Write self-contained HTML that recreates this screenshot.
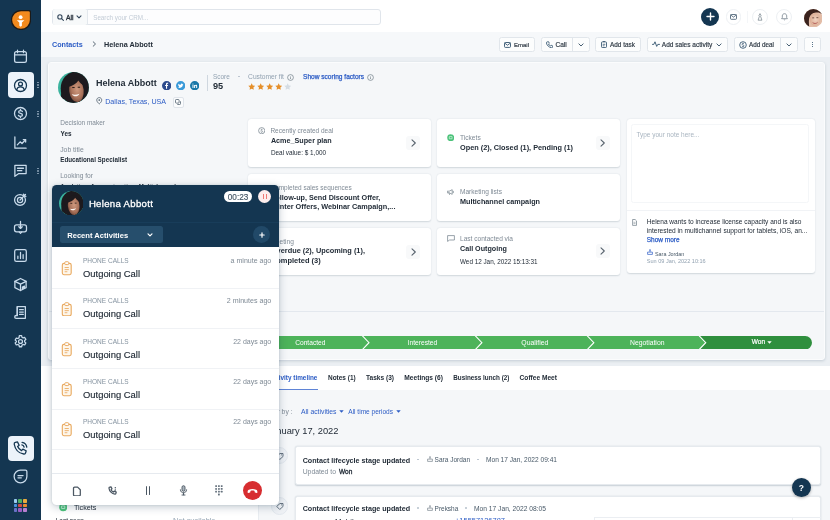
<!DOCTYPE html>
<html lang="en"><head><meta charset="utf-8"><title>Helena Abbott - Contacts</title>
<style>
html,body{margin:0;padding:0}
body{width:830px;height:520px;overflow:hidden;position:relative;background:#ebeff3;font-family:"Liberation Sans",sans-serif;-webkit-font-smoothing:antialiased;filter:blur(0.35px)}
.b{position:absolute;box-sizing:border-box;display:block}
.t{position:absolute;white-space:nowrap;display:block}
</style></head><body>
<div class="b" style="left:41.00px;top:0.00px;width:789.00px;height:32.00px;background:#ffffff;"></div>
<div class="b" style="left:41.00px;top:32.00px;width:789.00px;height:24.50px;background:#f6f8fa;"></div>
<div class="b" style="left:41.00px;top:56.50px;width:789.00px;height:464.00px;background:#ebeff3;"></div>
<div class="b" style="left:47.50px;top:62.30px;width:777.50px;height:298.20px;background:#f5f7f9;border:1px solid #fbfcfd;border-radius:3px;box-shadow:0 1px 3px rgba(18,52,77,.18);"></div>
<div class="b" style="left:0.00px;top:0.00px;width:41.00px;height:520.00px;background:#143651;"></div>
<svg class="b" style="left:10.50px;top:10.00px;" width="20" height="20" viewBox="0 0 20 20"><path d="M10 0.5h7.5a2 2 0 0 1 2 2V10a9.5 9.5 0 1 1-9.5-9.5z" fill="#f28a1e" stroke="#1c1a18" stroke-width="1.300"/><circle cx="9.6" cy="7.2" r="1.9" fill="#fff"/><path d="M5.8 10.3h7.6l-2.5 2.3v3.2l-1.3 1-1.3-1v-3.2z" fill="#fff"/></svg>
<div class="b" style="left:7.50px;top:72.30px;width:26.00px;height:25.50px;background:#ecf3fa;border-radius:4px;"></div>
<div class="b" style="left:7.50px;top:435.80px;width:26.00px;height:25.50px;background:#ecf3fa;border-radius:4px;"></div>
<svg class="b" style="left:12.80px;top:48.50px;" width="15" height="15" viewBox="0 0 16 16"><g fill="none" stroke="#c9dbeb" stroke-width="1.35" stroke-linecap="round" stroke-linejoin="round"><rect x="1.7" y="2.8" width="12.6" height="11.4" rx="2"/><path d="M1.7 6.3h12.6M4.8 1.3v2.6M11.2 1.3v2.6"/></g></svg>
<svg class="b" style="left:12.80px;top:77.50px;" width="15" height="15" viewBox="0 0 16 16"><g fill="none" stroke="#143651" stroke-width="1.35" stroke-linecap="round" stroke-linejoin="round"><circle cx="8" cy="8" r="6.4"/><circle cx="8" cy="6.4" r="2.1"/><path d="M3.9 12.6c.6-2.2 2.2-3.1 4.1-3.1s3.5.9 4.1 3.1"/></g></svg>
<svg class="b" style="left:12.80px;top:106.30px;" width="15" height="15" viewBox="0 0 16 16"><g fill="none" stroke="#c9dbeb" stroke-width="1.35" stroke-linecap="round" stroke-linejoin="round"><circle cx="8" cy="8" r="6.4"/><path d="M10 5.9c-.4-.7-1.1-1-2-1-1.200 0-2 .6-2 1.500 0 2.100 4.100 1 4.100 3.200 0 .9-.9 1.500-2.100 1.500-1 0-1.800-.4-2.200-1.100M8 3.700v1.200M8 11.100v1.200"/></g></svg>
<svg class="b" style="left:12.80px;top:135.00px;" width="15" height="15" viewBox="0 0 16 16"><g fill="none" stroke="#c9dbeb" stroke-width="1.35" stroke-linecap="round" stroke-linejoin="round"><path d="M2 2v12h12"/><path d="M4.600 10.500l3-3.200 2 1.800 3.800-4"/><path d="M11 5h2.500v2.500"/></g></svg>
<svg class="b" style="left:12.80px;top:163.30px;" width="15" height="15" viewBox="0 0 16 16"><g fill="none" stroke="#c9dbeb" stroke-width="1.35" stroke-linecap="round" stroke-linejoin="round"><path d="M2 2.500h12v8.800H6.200L2 14.200z"/><path d="M4.800 5.600h6.400M4.800 8.200h4.600"/></g></svg>
<svg class="b" style="left:12.80px;top:191.50px;" width="15" height="15" viewBox="0 0 16 16"><g fill="none" stroke="#c9dbeb" stroke-width="1.35" stroke-linecap="round" stroke-linejoin="round"><circle cx="7.500" cy="8.500" r="5.800"/><circle cx="7.500" cy="8.500" r="2.800"/><path d="M7.500 8.500l5.800-5.800M11.300 2.200l.4 2 2 .4"/></g></svg>
<svg class="b" style="left:12.80px;top:220.30px;" width="15" height="15" viewBox="0 0 16 16"><g fill="none" stroke="#c9dbeb" stroke-width="1.35" stroke-linecap="round" stroke-linejoin="round"><rect x="1.600" y="5.300" width="12.800" height="7.400" rx="2.200"/><path d="M8 1.400v7.400M6.200 7.200L8 9l1.800-1.800M6.600 12.700L8 14.200l1.400-1.500"/></g></svg>
<svg class="b" style="left:12.80px;top:248.10px;" width="15" height="15" viewBox="0 0 16 16"><g fill="none" stroke="#c9dbeb" stroke-width="1.35" stroke-linecap="round" stroke-linejoin="round"><rect x="1.800" y="1.800" width="12.400" height="12.400" rx="1.800"/><path d="M5.200 11.300V8.800M8 11.300V4.800M10.800 11.300V7.200"/></g></svg>
<svg class="b" style="left:12.80px;top:276.50px;" width="15" height="15" viewBox="0 0 16 16"><g fill="none" stroke="#c9dbeb" stroke-width="1.35" stroke-linecap="round" stroke-linejoin="round"><path d="M8 1.600l6 3v6.800l-6 3-6-3V4.600z"/><path d="M2 4.600l6 3 6-3M8 7.600v6.800"/><path d="M10 10.800l2.200-1.100v1.600l-2.200 1.100z"/></g></svg>
<svg class="b" style="left:12.80px;top:305.30px;" width="15" height="15" viewBox="0 0 16 16"><g fill="none" stroke="#c9dbeb" stroke-width="1.35" stroke-linecap="round" stroke-linejoin="round"><path d="M4.500 1.800h8.700v12.400H3.500c-1.100 0-1.700-.7-1.700-1.500s.6-1.500 1.700-1.500h1z"/><path d="M4.500 11.200V1.800M7 5h4M7 7.500h4M7 10h4"/></g></svg>
<svg class="b" style="left:12.80px;top:333.70px;" width="15" height="15" viewBox="0 0 16 16"><g fill="none" stroke="#c9dbeb" stroke-width="1.35" stroke-linecap="round" stroke-linejoin="round"><circle cx="8" cy="8" r="2.100"/><path d="M6.800 1.800h2.400l.4 1.700 1.200.7 1.700-.5 1.200 2.100-1.300 1.200v1.400l1.300 1.200-1.200 2.100-1.700-.5-1.200.7-.4 1.700H6.800l-.4-1.700-1.200-.7-1.700.5-1.200-2.100 1.300-1.200V7.600L2.300 6.400l1.200-2.100 1.700.5 1.200-.7z"/></g></svg>
<svg class="b" style="left:11.90px;top:439.90px;" width="17" height="17" viewBox="0 0 16 16"><g fill="none" stroke="#143651" stroke-width="1.250" stroke-linecap="round" stroke-linejoin="round"><path d="M3.200 2.300l2-.5 1.500 3.200-1.400 1.200c.7 1.700 2 3 3.700 3.800l1.200-1.400 3.100 1.500-.5 2c-.2.800-.9 1.200-1.700 1.100C6.500 12.500 3 9 2.100 4c-.1-.8.300-1.500 1.100-1.700z"/><path d="M9.300 4.600c1.100.2 1.900 1 2.100 2.100M9.500 2.200c2.300.4 4 2.100 4.400 4.400"/></g></svg>
<svg class="b" style="left:12.80px;top:469.20px;" width="15" height="15" viewBox="0 0 16 16"><g fill="none" stroke="#c9dbeb" stroke-width="1.35" stroke-linecap="round" stroke-linejoin="round"><path d="M8 1.200h5.300a1.500 1.500 0 0 1 1.500 1.500V8A6.800 6.800 0 1 1 8 1.200z"/><path d="M5.300 7h5.400M5.300 9.400h3.600"/></g></svg>
<div class="b" style="left:13.60px;top:498.80px;width:3.90px;height:3.90px;background:#9ccdf0;border-radius:0.8px;"></div>
<div class="b" style="left:18.30px;top:498.80px;width:3.90px;height:3.90px;background:#4fae62;border-radius:0.8px;"></div>
<div class="b" style="left:23.00px;top:498.80px;width:3.90px;height:3.90px;background:#e9ab3f;border-radius:0.8px;"></div>
<div class="b" style="left:13.60px;top:503.50px;width:3.90px;height:3.90px;background:#4a92de;border-radius:0.8px;"></div>
<div class="b" style="left:18.30px;top:503.50px;width:3.90px;height:3.90px;background:#d24a47;border-radius:0.8px;"></div>
<div class="b" style="left:23.00px;top:503.50px;width:3.90px;height:3.90px;background:#e58a2e;border-radius:0.8px;"></div>
<div class="b" style="left:13.60px;top:508.20px;width:3.90px;height:3.90px;background:#6a72c8;border-radius:0.8px;"></div>
<div class="b" style="left:18.30px;top:508.20px;width:3.90px;height:3.90px;background:#9a5cc4;border-radius:0.8px;"></div>
<div class="b" style="left:23.00px;top:508.20px;width:3.90px;height:3.90px;background:#b97fd0;border-radius:0.8px;"></div>
<div class="b" style="left:37.10px;top:81.80px;width:1.50px;height:1.50px;background:#8ba2b5;border-radius:1px;"></div>
<div class="b" style="left:37.10px;top:84.30px;width:1.50px;height:1.50px;background:#8ba2b5;border-radius:1px;"></div>
<div class="b" style="left:37.10px;top:86.80px;width:1.50px;height:1.50px;background:#8ba2b5;border-radius:1px;"></div>
<div class="b" style="left:37.10px;top:110.60px;width:1.50px;height:1.50px;background:#8ba2b5;border-radius:1px;"></div>
<div class="b" style="left:37.10px;top:113.10px;width:1.50px;height:1.50px;background:#8ba2b5;border-radius:1px;"></div>
<div class="b" style="left:37.10px;top:115.60px;width:1.50px;height:1.50px;background:#8ba2b5;border-radius:1px;"></div>
<div class="b" style="left:37.10px;top:167.60px;width:1.50px;height:1.50px;background:#8ba2b5;border-radius:1px;"></div>
<div class="b" style="left:37.10px;top:170.10px;width:1.50px;height:1.50px;background:#8ba2b5;border-radius:1px;"></div>
<div class="b" style="left:37.10px;top:172.60px;width:1.50px;height:1.50px;background:#8ba2b5;border-radius:1px;"></div>
<div class="b" style="left:52.00px;top:8.60px;width:329.00px;height:16.80px;background:#fdfdfe;border:1px solid #e0e5eb;border-radius:3px;"></div>
<div class="b" style="left:52.80px;top:9.40px;width:34.40px;height:15.20px;background:#f7f9fa;border-radius:2px;"></div>
<div class="b" style="left:87.20px;top:9.40px;width:0.80px;height:15.20px;background:#e3e8ed;"></div>
<svg class="b" style="left:57.30px;top:13.90px;" width="7" height="7" viewBox="0 0 7 7"><circle cx="2.900" cy="2.900" r="2.100" fill="none" stroke="#33475b" stroke-width="1.100"/><path d="M4.600 4.600l1.800 1.800" stroke="#33475b" stroke-width="1.100" stroke-linecap="round"/></svg>
<span class="t" style="left:65.90px;top:12px;font-size:6.75px;line-height:11px;color:#232d38;-webkit-text-stroke:0.3px #232d38;">All</span>
<svg class="b" style="left:76.30px;top:15.40px;" width="6" height="4" viewBox="0 0 6 4"><path d="M1 0.900l2 2 2-2" fill="none" stroke="#33475b" stroke-width="1.100" stroke-linecap="round" stroke-linejoin="round"/></svg>
<span class="t" style="left:93.20px;top:12px;font-size:6.29px;line-height:11px;color:#c3ccd6;">Search your CRM...</span>
<div class="b" style="left:701.40px;top:8.10px;width:17.60px;height:17.60px;background:#143651;border-radius:10px;"></div>
<svg class="b" style="left:705.70px;top:12.40px;" width="9" height="9" viewBox="0 0 9 9"><path d="M4.500 1v7M1 4.500h7" stroke="#fff" stroke-width="1.400" stroke-linecap="round"/></svg>
<div class="b" style="left:725.60px;top:9.00px;width:15.60px;height:15.60px;background:#ffffff;border:1px solid #edf0f3;border-radius:8px;"></div>
<div class="b" style="left:752.20px;top:9.00px;width:15.60px;height:15.60px;background:#ffffff;border:1px solid #edf0f3;border-radius:8px;"></div>
<div class="b" style="left:776.20px;top:9.00px;width:15.60px;height:15.60px;background:#ffffff;border:1px solid #edf0f3;border-radius:8px;"></div>
<div class="b" style="left:747.30px;top:11.00px;width:0.70px;height:12.00px;background:#f4f6f8;"></div>
<svg class="b" style="left:729.90px;top:13.80px;" width="7" height="6" viewBox="0 0 7 6"><rect x="0.500" y="0.500" width="6" height="4.800" rx="0.800" fill="none" stroke="#3d566b" stroke-width="0.800"/><path d="M0.700 1l2.800 2.100 2.800-2.100" fill="none" stroke="#3d566b" stroke-width="0.800"/></svg>
<svg class="b" style="left:757.00px;top:13.00px;" width="6" height="8" viewBox="0 0 6 8"><path d="M3 0.600l1.100 2.200-.5.500 1.300 3.900H1.100l1.300-3.900-.5-.5z" fill="none" stroke="#6f7c87" stroke-width="0.700" stroke-linejoin="round"/></svg>
<svg class="b" style="left:780.50px;top:13.20px;" width="7" height="8" viewBox="0 0 7 8"><path d="M3.500 0.700c1.400 0 2.200 1 2.200 2.300v1.600l.7 1.100H.600l.7-1.100V3c0-1.300.800-2.300 2.200-2.300z" fill="none" stroke="#6f7c87" stroke-width="0.750" stroke-linejoin="round"/><path d="M2.800 6.600c.2.400 1.200.4 1.400 0" fill="none" stroke="#6f7c87" stroke-width="0.700"/></svg>
<svg class="b" style="left:803.50px;top:8.90px;" width="18.6" height="18.6" viewBox="0 0 21 21"><defs><clipPath id="ua"><circle cx="10.500" cy="10.500" r="10.500"/></clipPath><radialGradient id="ug" cx="0.55" cy="0.5" r="0.6"><stop offset="0" stop-color="#f0d2c0"/><stop offset="1" stop-color="#d9a98f"/></radialGradient></defs><g clip-path="url(#ua)"><rect width="21" height="21" fill="#e3bda8"/><path d="M-1 -1h23v9c-1.500-3-4.500-4.500-8.500-4C9.500 4.500 7 6.500 6 10c-.8 3-.5 6 0 12H-1z" fill="#3a221d"/><ellipse cx="12.500" cy="11.800" rx="6" ry="7.200" fill="url(#ug)"/><path d="M9.800 15.300c1.500 1.500 4 1.500 5.500-.2" stroke="#b5605a" stroke-width="1.100" fill="none"/><path d="M9.300 10h2.200M14 9.800h2.200" stroke="#5a3a30" stroke-width="0.900"/></g></svg>
<span class="t" style="left:52.00px;top:38px;font-size:7.20px;line-height:13px;color:#2c5cc5;font-weight:700;">Contacts</span>
<svg class="b" style="left:92.00px;top:41.30px;" width="5" height="6" viewBox="0 0 5 6"><path d="M1.200 0.800l2.300 2.200-2.300 2.200" fill="none" stroke="#475867" stroke-width="0.900" stroke-linecap="round" stroke-linejoin="round"/></svg>
<span class="t" style="left:104.00px;top:38px;font-size:7.25px;line-height:13px;color:#232d38;font-weight:700;">Helena Abbott</span>
<div class="b" style="left:498.60px;top:36.50px;width:36.90px;height:15.80px;background:#fcfdfd;border:1px solid #e1e6eb;border-radius:2.5px;"></div>
<div class="b" style="left:540.80px;top:36.50px;width:49.00px;height:15.80px;background:#fcfdfd;border:1px solid #e1e6eb;border-radius:2.5px;"></div>
<div class="b" style="left:572.40px;top:37.00px;width:0.80px;height:14.80px;background:#e1e6eb;"></div>
<div class="b" style="left:594.50px;top:36.50px;width:46.50px;height:15.80px;background:#fcfdfd;border:1px solid #e1e6eb;border-radius:2.5px;"></div>
<div class="b" style="left:646.60px;top:36.50px;width:81.40px;height:15.80px;background:#fcfdfd;border:1px solid #e1e6eb;border-radius:2.5px;"></div>
<div class="b" style="left:734.30px;top:36.50px;width:63.70px;height:15.80px;background:#fcfdfd;border:1px solid #e1e6eb;border-radius:2.5px;"></div>
<div class="b" style="left:779.60px;top:37.00px;width:0.80px;height:14.80px;background:#e1e6eb;"></div>
<div class="b" style="left:804.00px;top:36.50px;width:16.80px;height:15.80px;background:#fcfdfd;border:1px solid #e1e6eb;border-radius:2.5px;"></div>
<svg class="b" style="left:503.60px;top:41.50px;" width="7" height="6" viewBox="0 0 7 6"><rect x="0.500" y="0.500" width="6" height="4.900" rx="0.900" fill="none" stroke="#264966" stroke-width="0.850"/><path d="M0.700 1.100l2.800 2.100 2.800-2.100" fill="none" stroke="#264966" stroke-width="0.850"/></svg>
<span class="t" style="left:514.00px;top:40px;font-size:6.00px;line-height:10px;color:#2c3742;-webkit-text-stroke:0.17px #2c3742;">Email</span>
<svg class="b" style="left:545.60px;top:41.00px;" width="7" height="7" viewBox="0 0 7 7"><path d="M1.300 0.900l1.100-.3.900 1.700-.8.700c.4.900 1.100 1.600 2 2l.7-.8 1.700.900-.3 1.100c-.1.400-.5.600-.9.600C3 6.500 .7 4.200 .4 1.800c0-.4.200-.8.900-.9z" fill="none" stroke="#264966" stroke-width="0.800" stroke-linejoin="round"/></svg>
<span class="t" style="left:555.50px;top:39px;font-size:6.56px;line-height:11px;color:#2c3742;-webkit-text-stroke:0.17px #2c3742;">Call</span>
<svg class="b" style="left:577.60px;top:42.50px;" width="6" height="4" viewBox="0 0 6 4"><path d="M0.900 0.900l2.100 2.100 2.100-2.100" fill="none" stroke="#3d566b" stroke-width="0.950" stroke-linecap="round" stroke-linejoin="round"/></svg>
<svg class="b" style="left:600.60px;top:41.00px;" width="6" height="7" viewBox="0 0 6 7"><rect x="0.500" y="0.900" width="5" height="5.600" rx="0.800" fill="none" stroke="#264966" stroke-width="0.800"/><path d="M1.900 0.500h2.200M1.700 3.300h2.600M1.700 4.800h1.800" stroke="#264966" stroke-width="0.700" fill="none"/></svg>
<span class="t" style="left:610.00px;top:39px;font-size:6.42px;line-height:11px;color:#2c3742;-webkit-text-stroke:0.17px #2c3742;">Add task</span>
<svg class="b" style="left:652.00px;top:41.40px;" width="8" height="6" viewBox="0 0 8 6"><path d="M0.500 3.400h1.300l1.200-2.600 1.700 4.600 1.100-2h1.700" fill="none" stroke="#264966" stroke-width="0.850" stroke-linecap="round" stroke-linejoin="round"/></svg>
<span class="t" style="left:661.80px;top:39px;font-size:6.54px;line-height:11px;color:#2c3742;-webkit-text-stroke:0.17px #2c3742;">Add sales activity</span>
<svg class="b" style="left:716.00px;top:42.50px;" width="6" height="4" viewBox="0 0 6 4"><path d="M0.900 0.900l2.100 2.100 2.100-2.100" fill="none" stroke="#3d566b" stroke-width="0.950" stroke-linecap="round" stroke-linejoin="round"/></svg>
<svg class="b" style="left:739.20px;top:40.80px;" width="8" height="8" viewBox="0 0 8 8"><circle cx="4" cy="4" r="3.300" fill="none" stroke="#264966" stroke-width="0.800"/><path d="M5 3c-.2-.4-.6-.5-1-.5-.6 0-1 .3-1 .750 0 1 2 .5 2 1.550 0 .450-.4.750-1 .750-.5 0-.9-.2-1.100-.550M4 1.800v.7M4 5.500v.7" fill="none" stroke="#264966" stroke-width="0.650"/></svg>
<span class="t" style="left:749.00px;top:39px;font-size:6.33px;line-height:11px;color:#2c3742;-webkit-text-stroke:0.17px #2c3742;">Add deal</span>
<svg class="b" style="left:786.00px;top:42.50px;" width="6" height="4" viewBox="0 0 6 4"><path d="M0.900 0.900l2.100 2.100 2.100-2.100" fill="none" stroke="#3d566b" stroke-width="0.950" stroke-linecap="round" stroke-linejoin="round"/></svg>
<div class="b" style="left:811.80px;top:41.60px;width:1.30px;height:1.30px;background:#264966;border-radius:1px;"></div>
<div class="b" style="left:811.80px;top:43.90px;width:1.30px;height:1.30px;background:#264966;border-radius:1px;"></div>
<div class="b" style="left:811.80px;top:46.20px;width:1.30px;height:1.30px;background:#264966;border-radius:1px;"></div>
<svg class="b" style="left:57.80px;top:72.10px;" width="30.9" height="30.9" viewBox="0 0 31 31"><defs><clipPath id="hac"><circle cx="15.500" cy="15.500" r="15.500"/></clipPath><radialGradient id="hag" cx="0.55" cy="0.45" r="0.65"><stop offset="0" stop-color="#cf9a7f"/><stop offset="0.6" stop-color="#a9725a"/><stop offset="1" stop-color="#6b4234"/></radialGradient></defs><g clip-path="url(#hac)"><rect width="31" height="31" fill="#3bb39e"/><ellipse cx="18" cy="16.500" rx="15.300" ry="17" fill="#1d1a1e"/><path d="M4 31c-2-6-1-12 2-18l3 8z" fill="#1d1a1e"/><ellipse cx="18.500" cy="18.600" rx="7.300" ry="11.600" fill="url(#hag)" transform="rotate(-6 18.500 18.600)"/><path d="M10 15c.5-6 4-9.500 8.500-9.500s7.500 3.500 8 8.500c-2.500-1.500-5-3.500-6-5.500-2 3-6 5.500-10.500 6.500z" fill="#1d1a1e"/><path d="M13.800 22.300c2.200 3 6 2.800 7.700-.5-2.500 1-5.200 1.200-7.700.5z" fill="#fbf3ef"/><path d="M14.300 15.600h2.400M19.800 15.300h2.400" stroke="#2a1c18" stroke-width="1"/></g></svg>
<span class="t" style="left:96.10px;top:76px;font-size:9.00px;line-height:14px;color:#232d38;font-weight:700;">Helena Abbott</span>
<svg class="b" style="left:161.80px;top:81.10px;" width="9.4" height="9.4" viewBox="0 0 9.4 9.4"><circle cx="4.700" cy="4.700" r="4.700" fill="#2c4a8c"/><path d="M5.100 7.800V5h.9l.150-1.100H5.100v-.6c0-.3.100-.55.550-.55h.55V1.800c-.1 0-.45-.05-.8-.05-.85 0-1.400.5-1.400 1.400v.750h-.9V5h.9v2.800z" fill="#fff"/></svg>
<svg class="b" style="left:175.80px;top:81.10px;" width="9.4" height="9.4" viewBox="0 0 9.4 9.4"><circle cx="4.700" cy="4.700" r="4.700" fill="#3a9ad9"/><path d="M7.400 3.100c-.2.100-.4.150-.65.200.25-.150.4-.35.500-.6-.2.100-.45.200-.7.250a1.100 1.100 0 0 0-1.900 1c-.95-.05-1.750-.5-2.300-1.150-.3.500-.150 1.150.35 1.450-.2 0-.35-.05-.5-.150 0 .55.400 1 .9 1.100-.150.050-.35.050-.5 0 .150.450.550.750 1.050.750-.450.350-1.050.55-1.650.450.500.350 1.100.5 1.700.5 2.100 0 3.250-1.750 3.150-3.300.2-.150.4-.35.550-.5z" fill="#fff"/></svg>
<svg class="b" style="left:189.90px;top:81.10px;" width="9.4" height="9.4" viewBox="0 0 9.4 9.4"><circle cx="4.700" cy="4.700" r="4.700" fill="#1a78a8"/><path d="M2.500 3.900h.95v3H2.500zM2.950 2.400a.55.55 0 1 1 0 1.100.55.55 0 0 1 0-1.100zM4.100 3.900H5v.4c.150-.25.500-.5 1-.5.950 0 1.150.6 1.150 1.450V6.900H6.200V5.450c0-.4 0-.8-.5-.8s-.6.350-.6.750V6.900h-.950z" fill="#fff"/></svg>
<div class="b" style="left:207.00px;top:74.50px;width:0.80px;height:16.00px;background:#cfd7df;"></div>
<span class="t" style="left:213.00px;top:71px;font-size:6.43px;line-height:11px;color:#92a2b1;">Score</span>
<span class="t" style="left:213.00px;top:79px;font-size:9.17px;line-height:14px;color:#232d38;font-weight:700;">95</span>
<div class="b" style="left:237.80px;top:75.60px;width:1.80px;height:1.80px;background:#b5c0cb;border-radius:1px;"></div>
<span class="t" style="left:248.10px;top:71px;font-size:6.66px;line-height:11px;color:#92a2b1;">Customer fit</span>
<svg class="b" style="left:287.00px;top:73.50px;" width="7" height="7" viewBox="0 0 7 7"><circle cx="3.500" cy="3.500" r="2.900" fill="none" stroke="#6f7c87" stroke-width="0.700"/><path d="M3.500 3.200v1.800M3.500 2v.5" stroke="#6f7c87" stroke-width="0.700"/></svg>
<span class="t" style="left:303.00px;top:71px;font-size:6.59px;line-height:11px;color:#2c5cc5;-webkit-text-stroke:0.25px #2c5cc5;">Show scoring factors</span>
<svg class="b" style="left:366.90px;top:73.50px;" width="7" height="7" viewBox="0 0 7 7"><circle cx="3.500" cy="3.500" r="2.900" fill="none" stroke="#6f7c87" stroke-width="0.700"/><path d="M3.500 3.200v1.800M3.500 2v.5" stroke="#6f7c87" stroke-width="0.700"/></svg>
<svg class="b" style="left:247.70px;top:83.00px;" width="7.4" height="7.4" viewBox="0 0 7.4 7.4"><path d="M3.700 0.300l1.050 2.150 2.350.35-1.700 1.650.4 2.350L3.700 5.700 1.600 6.800l.4-2.350L.300 2.800l2.350-.35z" fill="#e58f2a"/></svg>
<svg class="b" style="left:256.70px;top:83.00px;" width="7.4" height="7.4" viewBox="0 0 7.4 7.4"><path d="M3.700 0.300l1.050 2.150 2.350.35-1.700 1.650.4 2.350L3.700 5.700 1.600 6.800l.4-2.350L.300 2.800l2.350-.35z" fill="#e58f2a"/></svg>
<svg class="b" style="left:265.70px;top:83.00px;" width="7.4" height="7.4" viewBox="0 0 7.4 7.4"><path d="M3.700 0.300l1.050 2.150 2.350.35-1.700 1.650.4 2.350L3.700 5.700 1.600 6.800l.4-2.350L.300 2.800l2.350-.35z" fill="#e58f2a"/></svg>
<svg class="b" style="left:274.70px;top:83.00px;" width="7.4" height="7.4" viewBox="0 0 7.4 7.4"><path d="M3.700 0.300l1.050 2.150 2.350.35-1.700 1.650.4 2.350L3.700 5.700 1.600 6.800l.4-2.350L.300 2.800l2.350-.35z" fill="#e58f2a"/></svg>
<svg class="b" style="left:283.80px;top:83.00px;" width="7.4" height="7.4" viewBox="0 0 7.4 7.4"><path d="M3.700 0.300l1.050 2.150 2.350.35-1.700 1.650.4 2.350L3.700 5.700 1.600 6.800l.4-2.350L.300 2.800l2.350-.35z" fill="#d5dce3"/></svg>
<svg class="b" style="left:96.00px;top:97.40px;" width="6.5" height="7.5" viewBox="0 0 7 8"><path d="M3.500 0.600c1.600 0 2.700 1.200 2.700 2.650 0 1.700-1.600 3.200-2.700 4.150C2.400 6.450 .800 4.950 .800 3.250 .800 1.800 1.900 .6 3.500 .6z" fill="none" stroke="#475867" stroke-width="0.800"/><circle cx="3.500" cy="3.200" r="0.900" fill="#475867"/></svg>
<span class="t" style="left:105.20px;top:96px;font-size:7.14px;line-height:12px;color:#2c5cc5;">Dallas, Texas, USA</span>
<div class="b" style="left:172.80px;top:96.80px;width:11.00px;height:11.00px;background:#fbfcfd;border:1px solid #dfe4ea;border-radius:2px;"></div>
<svg class="b" style="left:175.30px;top:99.30px;" width="6" height="6" viewBox="0 0 6 6"><rect x="0.500" y="0.500" width="3.600" height="3.600" rx="0.800" fill="none" stroke="#475867" stroke-width="0.750"/><path d="M2.300 5.500h2.400a.8.800 0 0 0 .8-.8V2.300" fill="none" stroke="#475867" stroke-width="0.750"/></svg>
<span class="t" style="left:60.20px;top:117px;font-size:6.50px;line-height:11px;color:#7f8a95;">Decision maker</span>
<span class="t" style="left:60.50px;top:128px;font-size:6.38px;line-height:11px;color:#232d38;font-weight:700;">Yes</span>
<span class="t" style="left:60.20px;top:144px;font-size:6.82px;line-height:11px;color:#7f8a95;">Job title</span>
<span class="t" style="left:60.20px;top:154px;font-size:6.31px;line-height:11px;color:#232d38;font-weight:700;">Educational Specialist</span>
<span class="t" style="left:60.20px;top:170px;font-size:6.63px;line-height:11px;color:#7f8a95;">Looking for</span>
<span class="t" style="left:60.20px;top:180px;font-size:6.11px;line-height:11px;color:#232d38;font-weight:700;">Analytics, Account option, Multichannel</span>
<div class="b" style="left:247.50px;top:119.30px;width:183.50px;height:48.00px;background:#fff;border-radius:3px;box-shadow:0 0.500px 1.500px rgba(18,52,77,.16);"></div>
<div class="b" style="left:436.70px;top:119.30px;width:183.60px;height:48.00px;background:#fff;border-radius:3px;box-shadow:0 0.500px 1.500px rgba(18,52,77,.16);"></div>
<div class="b" style="left:247.50px;top:173.80px;width:183.50px;height:47.30px;background:#fff;border-radius:3px;box-shadow:0 0.500px 1.500px rgba(18,52,77,.16);"></div>
<div class="b" style="left:436.70px;top:173.80px;width:183.60px;height:47.30px;background:#fff;border-radius:3px;box-shadow:0 0.500px 1.500px rgba(18,52,77,.16);"></div>
<div class="b" style="left:247.50px;top:227.60px;width:183.50px;height:47.40px;background:#fff;border-radius:3px;box-shadow:0 0.500px 1.500px rgba(18,52,77,.16);"></div>
<div class="b" style="left:436.70px;top:227.60px;width:183.60px;height:47.40px;background:#fff;border-radius:3px;box-shadow:0 0.500px 1.500px rgba(18,52,77,.16);"></div>
<div class="b" style="left:627.20px;top:119.30px;width:188.10px;height:153.50px;background:#fff;border-radius:3px;box-shadow:0 0.500px 1.500px rgba(18,52,77,.16);"></div>
<svg class="b" style="left:257.80px;top:127.00px;" width="7.4" height="7.4" viewBox="0 0 7.4 7.4"><circle cx="3.700" cy="3.700" r="3.100" fill="none" stroke="#6f7c87" stroke-width="0.700"/><path d="M4.600 2.900c-.2-.35-.5-.45-.9-.45-.5 0-.9.250-.9.650 0 .9 1.800.450 1.800 1.400 0 .4-.35.650-.9.650-.450 0-.8-.150-1-.5M3.700 1.800v.6M3.700 5v.6" fill="none" stroke="#6f7c87" stroke-width="0.600"/></svg>
<span class="t" style="left:270.40px;top:125px;font-size:6.51px;line-height:11px;color:#7f8a95;">Recently created deal</span>
<span class="t" style="left:270.90px;top:134px;font-size:7.21px;line-height:13px;color:#232d38;font-weight:700;">Acme_Super plan</span>
<span class="t" style="left:270.90px;top:147px;font-size:6.41px;line-height:11px;color:#232d38;">Deal value: $ 1,000</span>
<div class="b" style="left:406.00px;top:136.40px;width:14.00px;height:14.00px;background:#f8f9fa;border-radius:3px;"></div>
<svg class="b" style="left:410.50px;top:139.40px;" width="5.5" height="8" viewBox="0 0 5.5 8"><path d="M1 0.800l3.300 3.200-3.300 3.200" fill="none" stroke="#56616c" stroke-width="1.050" stroke-linecap="round" stroke-linejoin="round"/></svg>
<span class="t" style="left:270.40px;top:182px;font-size:6.47px;line-height:11px;color:#7f8a95;">Completed sales sequences</span>
<span class="t" style="left:270.90px;top:191px;font-size:7.23px;line-height:13px;color:#232d38;font-weight:700;">Follow-up, Send Discount Offer,</span>
<span class="t" style="left:270.90px;top:200px;font-size:7.32px;line-height:13px;color:#232d38;font-weight:700;">Winter Offers, Webinar Campaign,...</span>
<span class="t" style="left:270.40px;top:236px;font-size:6.58px;line-height:11px;color:#7f8a95;">Meeting</span>
<span class="t" style="left:270.90px;top:244px;font-size:7.36px;line-height:13px;color:#232d38;font-weight:700;">Overdue (2), Upcoming (1),</span>
<span class="t" style="left:270.90px;top:254px;font-size:7.48px;line-height:13px;color:#232d38;font-weight:700;">Completed (3)</span>
<div class="b" style="left:406.00px;top:244.50px;width:14.00px;height:14.00px;background:#f8f9fa;border-radius:3px;"></div>
<svg class="b" style="left:410.50px;top:247.50px;" width="5.5" height="8" viewBox="0 0 5.5 8"><path d="M1 0.800l3.300 3.200-3.300 3.200" fill="none" stroke="#56616c" stroke-width="1.050" stroke-linecap="round" stroke-linejoin="round"/></svg>
<svg class="b" style="left:446.90px;top:134.10px;" width="7.4" height="7.4" viewBox="0 0 7.4 7.4"><circle cx="3.700" cy="3.700" r="3.500" fill="#4cc27a"/><path d="M2.300 2.600h2.800v2.200H2.300z" fill="none" stroke="#e9fff1" stroke-width="0.600"/></svg>
<span class="t" style="left:460.00px;top:132px;font-size:6.61px;line-height:11px;color:#7f8a95;">Tickets</span>
<span class="t" style="left:460.00px;top:141px;font-size:7.32px;line-height:13px;color:#232d38;font-weight:700;">Open (2), Closed (1), Pending (1)</span>
<div class="b" style="left:595.50px;top:136.30px;width:14.00px;height:14.00px;background:#f8f9fa;border-radius:3px;"></div>
<svg class="b" style="left:600.00px;top:139.30px;" width="5.5" height="8" viewBox="0 0 5.5 8"><path d="M1 0.800l3.300 3.200-3.300 3.200" fill="none" stroke="#56616c" stroke-width="1.050" stroke-linecap="round" stroke-linejoin="round"/></svg>
<svg class="b" style="left:446.60px;top:188.60px;" width="8" height="6" viewBox="0 0 8 6"><path d="M0.600 2.200h1.600l3-1.500v4.600l-3-1.500H.600zM2 3.900l.5 1.600M6.300 2.300v1.400" fill="none" stroke="#6f7c87" stroke-width="0.700" stroke-linejoin="round" stroke-linecap="round"/></svg>
<span class="t" style="left:460.00px;top:186px;font-size:6.57px;line-height:11px;color:#7f8a95;">Marketing lists</span>
<span class="t" style="left:460.00px;top:195px;font-size:7.24px;line-height:13px;color:#232d38;font-weight:700;">Multichannel campaign</span>
<svg class="b" style="left:446.60px;top:235.30px;" width="8" height="7" viewBox="0 0 8 7"><path d="M0.600 0.600h6.800v4.400H2.600L.600 6.400z" fill="none" stroke="#6f7c87" stroke-width="0.700" stroke-linejoin="round"/></svg>
<span class="t" style="left:460.00px;top:233px;font-size:6.58px;line-height:11px;color:#7f8a95;">Last contacted via</span>
<span class="t" style="left:460.00px;top:243px;font-size:7.17px;line-height:12px;color:#232d38;font-weight:700;">Call Outgoing</span>
<span class="t" style="left:460.00px;top:256px;font-size:6.34px;line-height:11px;color:#232d38;">Wed 12 Jan, 2022 15:13:31</span>
<div class="b" style="left:595.50px;top:244.20px;width:14.00px;height:14.00px;background:#f8f9fa;border-radius:3px;"></div>
<svg class="b" style="left:600.00px;top:247.20px;" width="5.5" height="8" viewBox="0 0 5.5 8"><path d="M1 0.800l3.300 3.200-3.300 3.200" fill="none" stroke="#56616c" stroke-width="1.050" stroke-linecap="round" stroke-linejoin="round"/></svg>
<div class="b" style="left:631.40px;top:123.70px;width:177.60px;height:79.00px;background:#fff;border:1px solid #f4f6f8;border-radius:2.5px;"></div>
<span class="t" style="left:636.40px;top:129px;font-size:6.49px;line-height:11px;color:#a9b5c0;">Type your note here...</span>
<div class="b" style="left:627.20px;top:209.80px;width:188.10px;height:0.70px;background:#f1f3f6;"></div>
<svg class="b" style="left:631.90px;top:218.60px;" width="5" height="7" viewBox="0 0 5 7"><path d="M0.600 0.500h2.500l1.400 1.400v4.500H.600z" fill="none" stroke="#6f7c87" stroke-width="0.700" stroke-linejoin="round"/><path d="M1.500 3.300h2M1.500 4.600h2" stroke="#6f7c87" stroke-width="0.500"/></svg>
<span class="t" style="left:646.80px;top:216px;font-size:6.55px;line-height:11px;color:#232d38;">Helena wants to increase license capacity and is also</span>
<span class="t" style="left:646.80px;top:225px;font-size:6.60px;line-height:11px;color:#232d38;">interested in multichannel support for tablets, iOS, an...</span>
<span class="t" style="left:646.80px;top:234px;font-size:6.47px;line-height:11px;color:#2c5cc5;-webkit-text-stroke:0.25px #2c5cc5;">Show more</span>
<svg class="b" style="left:646.80px;top:248.50px;" width="6" height="6" viewBox="0 0 6 6"><path d="M0.600 5.400V3.100h4.800v2.300zM3 0.600v2.500M2.100 1.400L3 .6l.9.800" fill="none" stroke="#2c5cc5" stroke-width="0.700" stroke-linejoin="round"/></svg>
<span class="t" style="left:655.00px;top:249px;font-size:5.40px;line-height:10px;color:#475867;">Sara Jordan</span>
<span class="t" style="left:646.80px;top:256px;font-size:5.55px;line-height:10px;color:#92a2b1;">Sun 09 Jan, 2022 10:16</span>
<div class="b" style="left:48.50px;top:311.00px;width:775.00px;height:0.80px;background:#e3e8ee;"></div>
<svg class="b" style="left:200.00px;top:336.00px;overflow:hidden;" width="613" height="13.4" viewBox="0 0 613 13.4"><path d="M0 0h499l6.700 6.700-6.700 6.700H0z" fill="#4db35a"/><path d="M499 0h106.500a6.700 6.700 0 0 1 0 13.400H499l6.700-6.700z" fill="#2f8f3e"/><path d="M162 -0.500l6.900 7.200-6.900 7.200" fill="none" stroke="#fff" stroke-width="1.100"/><path d="M275 -0.500l6.900 7.200-6.900 7.200" fill="none" stroke="#fff" stroke-width="1.100"/><path d="M387 -0.500l6.900 7.200-6.900 7.200" fill="none" stroke="#fff" stroke-width="1.100"/><path d="M499 -0.500l6.900 7.200-6.900 7.200" fill="none" stroke="#fff" stroke-width="1.100"/></svg>
<span class="t" style="left:295.20px;top:337px;font-size:6.65px;line-height:11px;color:#fff;">Contacted</span>
<span class="t" style="left:407.60px;top:337px;font-size:6.68px;line-height:11px;color:#fff;">Interested</span>
<span class="t" style="left:521.30px;top:337px;font-size:6.89px;line-height:11px;color:#fff;">Qualified</span>
<span class="t" style="left:630.00px;top:337px;font-size:6.82px;line-height:11px;color:#fff;">Negotiation</span>
<span class="t" style="left:751.80px;top:336px;font-size:6.48px;line-height:11px;color:#fff;-webkit-text-stroke:0.2px #fff;">Won</span>
<svg class="b" style="left:767.00px;top:340.60px;" width="5" height="3" viewBox="0 0 5 3"><path d="M0.300 0.300h4.400L2.500 2.700z" fill="#fff"/></svg>
<div class="b" style="left:41.00px;top:365.80px;width:789.00px;height:24.20px;background:#fff;"></div>
<div class="b" style="left:41.00px;top:389.50px;width:789.00px;height:0.70px;background:#e6eaef;"></div>
<span class="t" style="left:268.50px;top:372px;font-size:6.39px;line-height:11px;color:#2c5cc5;font-weight:700;">Activity timeline</span>
<div class="b" style="left:264.00px;top:388.60px;width:53.50px;height:1.10px;background:#5f84d6;"></div>
<span class="t" style="left:328.00px;top:372px;font-size:6.47px;line-height:11px;color:#232d38;font-weight:700;">Notes (1)</span>
<span class="t" style="left:366.00px;top:372px;font-size:6.57px;line-height:11px;color:#232d38;font-weight:700;">Tasks (3)</span>
<span class="t" style="left:404.30px;top:372px;font-size:6.63px;line-height:11px;color:#232d38;font-weight:700;">Meetings (6)</span>
<span class="t" style="left:453.30px;top:372px;font-size:6.32px;line-height:11px;color:#232d38;font-weight:700;">Business lunch (2)</span>
<span class="t" style="left:519.60px;top:372px;font-size:6.60px;line-height:11px;color:#232d38;font-weight:700;">Coffee Meet</span>
<div class="b" style="left:258.50px;top:390.20px;width:571.50px;height:131.00px;background:#f5f7f9;"></div>
<span class="t" style="left:264.64px;top:406px;font-size:6.80px;line-height:11px;color:#7f8a95;">Filter by :</span>
<span class="t" style="left:301.00px;top:406px;font-size:6.80px;line-height:11px;color:#2c5cc5;">All activities</span>
<svg class="b" style="left:338.80px;top:409.80px;" width="5" height="3" viewBox="0 0 5 3"><path d="M0.300 0.300h4.400L2.500 2.700z" fill="#2c5cc5"/></svg>
<span class="t" style="left:348.30px;top:406px;font-size:6.54px;line-height:11px;color:#2c5cc5;">All time periods</span>
<svg class="b" style="left:395.50px;top:409.80px;" width="5" height="3" viewBox="0 0 5 3"><path d="M0.300 0.300h4.400L2.500 2.700z" fill="#2c5cc5"/></svg>
<span class="t" style="left:266.50px;top:424px;font-size:9.32px;line-height:14px;color:#232d38;">January 17, 2022</span>
<div class="b" style="left:41.00px;top:390.00px;width:217.50px;height:131.00px;background:#fff;"></div>
<div class="b" style="left:258.20px;top:390.00px;width:0.80px;height:131.00px;background:#e9edf1;"></div>
<svg class="b" style="left:58.60px;top:503.40px;" width="8.4" height="8.4" viewBox="0 0 7.400 7.400"><circle cx="3.700" cy="3.700" r="3.500" fill="#4cc27a"/><path d="M2.300 2.600h2.800v2.200H2.300z" fill="none" stroke="#e9fff1" stroke-width="0.600"/></svg>
<span class="t" style="left:73.90px;top:501px;font-size:7.19px;line-height:13px;color:#232d38;">Tickets</span>
<span class="t" style="left:55.70px;top:515px;font-size:6.53px;line-height:11px;color:#232d38;">Last seen</span>
<span class="t" style="left:173.00px;top:514px;font-size:7.35px;line-height:13px;color:#92a2b1;">Not available</span>
<div class="b" style="left:294.60px;top:446.30px;width:526.70px;height:38.60px;background:#fff;border:1px solid #e6eaee;border-radius:2.5px;box-shadow:0 0.500px 1.500px rgba(18,52,77,.2);"></div>
<div class="b" style="left:294.60px;top:495.80px;width:526.70px;height:38.60px;background:#fff;border:1px solid #e6eaee;border-radius:2.5px;box-shadow:0 0.500px 1.500px rgba(18,52,77,.2);"></div>
<span class="t" style="left:302.70px;top:455px;font-size:7.17px;line-height:12px;color:#232d38;font-weight:700;">Contact lifecycle stage updated</span>
<div class="b" style="left:417.40px;top:459.20px;width:1.30px;height:1.30px;background:#b5c0cb;border-radius:1px;"></div>
<svg class="b" style="left:426.80px;top:456.30px;" width="6" height="6" viewBox="0 0 6 6"><path d="M0.600 5.400V3.100h4.800v2.300zM3 0.600v2.500M2.100 1.400L3 .6l.9.800" fill="none" stroke="#6f7c87" stroke-width="0.650" stroke-linejoin="round"/></svg>
<span class="t" style="left:434.60px;top:454px;font-size:6.50px;line-height:11px;color:#475867;">Sara Jordan</span>
<div class="b" style="left:477.40px;top:459.20px;width:1.30px;height:1.30px;background:#b5c0cb;border-radius:1px;"></div>
<span class="t" style="left:486.00px;top:454px;font-size:6.58px;line-height:11px;color:#475867;">Mon 17 Jan, 2022 09:41</span>
<span class="t" style="left:302.70px;top:466px;font-size:6.81px;line-height:11px;color:#7f8a95;">Updated to</span>
<span class="t" style="left:339.00px;top:466px;font-size:6.53px;line-height:11px;color:#232d38;-webkit-text-stroke:0.3px #232d38;">Won</span>
<span class="t" style="left:302.70px;top:503px;font-size:7.17px;line-height:12px;color:#232d38;font-weight:700;">Contact lifecycle stage updated</span>
<div class="b" style="left:417.40px;top:507.40px;width:1.30px;height:1.30px;background:#b5c0cb;border-radius:1px;"></div>
<svg class="b" style="left:426.80px;top:504.50px;" width="6" height="6" viewBox="0 0 6 6"><path d="M0.600 5.400V3.100h4.800v2.300zM3 0.600v2.500M2.100 1.400L3 .6l.9.800" fill="none" stroke="#6f7c87" stroke-width="0.650" stroke-linejoin="round"/></svg>
<span class="t" style="left:434.60px;top:503px;font-size:6.46px;line-height:11px;color:#475867;">Preksha</span>
<div class="b" style="left:465.40px;top:507.40px;width:1.30px;height:1.30px;background:#b5c0cb;border-radius:1px;"></div>
<span class="t" style="left:474.00px;top:503px;font-size:6.68px;line-height:11px;color:#475867;">Mon 17 Jan, 2022 08:05</span>
<span class="t" style="left:335.00px;top:515px;font-size:7.81px;line-height:13px;color:#232d38;">Mobile</span>
<span class="t" style="left:455.00px;top:514px;font-size:7.46px;line-height:13px;color:#2c5cc5;">+15557126787</span>
<div class="b" style="left:594.00px;top:517.30px;width:227.00px;height:0.80px;background:#ebeef2;"></div>
<div class="b" style="left:594.00px;top:517.30px;width:0.80px;height:3.00px;background:#ebeef2;"></div>
<div class="b" style="left:792.00px;top:517.30px;width:0.80px;height:3.00px;background:#ebeef2;"></div>
<div class="b" style="left:271.00px;top:446.90px;width:17.40px;height:17.40px;background:#eef1f5;border:1px solid #e3e8ee;border-radius:9px;"></div>
<svg class="b" style="left:275.70px;top:451.60px;" width="8" height="8" viewBox="0 0 8 8"><path d="M1 4.200l3-2.700h3v3L4 7.200zM5.400 2.900h.1" fill="none" stroke="#475867" stroke-width="0.800" stroke-linejoin="round" stroke-linecap="round"/></svg>
<div class="b" style="left:271.00px;top:497.30px;width:17.40px;height:17.40px;background:#eef1f5;border:1px solid #e3e8ee;border-radius:9px;"></div>
<svg class="b" style="left:275.70px;top:502.00px;" width="8" height="8" viewBox="0 0 8 8"><path d="M1 4.200l3-2.700h3v3L4 7.200zM5.400 2.900h.1" fill="none" stroke="#475867" stroke-width="0.800" stroke-linejoin="round" stroke-linecap="round"/></svg>
<div class="b" style="left:792.00px;top:478.20px;width:18.80px;height:18.80px;background:#143651;border-radius:10px;box-shadow:0 1px 3px rgba(0,0,0,.3);"></div>
<span class="t" style="left:798.80px;top:481px;font-size:8.51px;line-height:14px;color:#fff;font-weight:700;">?</span>
<div class="b" style="left:52.00px;top:185.00px;width:226.90px;height:320.30px;background:#fff;border-radius:4.5px;box-shadow:0 2px 9px rgba(18,52,77,.26),0 0 2px rgba(18,52,77,.16);overflow:hidden;"><div class="b" style="left:0;top:0;width:100%;height:62px;background:#143651"></div><div class="b" style="left:0;top:36.500px;width:100%;height:0.700px;background:#183d5a"></div></div>
<svg class="b" style="left:58.90px;top:190.80px;" width="24.6" height="24.6" viewBox="0 0 31 31"><defs><clipPath id="wac"><circle cx="15.500" cy="15.500" r="15.500"/></clipPath><radialGradient id="wag" cx="0.55" cy="0.45" r="0.65"><stop offset="0" stop-color="#cf9a7f"/><stop offset="0.6" stop-color="#a9725a"/><stop offset="1" stop-color="#6b4234"/></radialGradient></defs><g clip-path="url(#wac)"><rect width="31" height="31" fill="#3bb39e"/><ellipse cx="18" cy="16.500" rx="15.300" ry="17" fill="#1d1a1e"/><path d="M4 31c-2-6-1-12 2-18l3 8z" fill="#1d1a1e"/><ellipse cx="18.500" cy="18.600" rx="7.300" ry="11.600" fill="url(#wag)" transform="rotate(-6 18.500 18.600)"/><path d="M10 15c.5-6 4-9.500 8.500-9.500s7.500 3.500 8 8.500c-2.500-1.500-5-3.500-6-5.500-2 3-6 5.500-10.500 6.500z" fill="#1d1a1e"/><path d="M13.800 22.300c2.200 3 6 2.800 7.700-.5-2.500 1-5.200 1.200-7.700.5z" fill="#fbf3ef"/><path d="M14.300 15.600h2.400M19.800 15.300h2.400" stroke="#2a1c18" stroke-width="1"/></g></svg>
<span class="t" style="left:88.90px;top:196px;font-size:9.60px;line-height:15px;color:#fff;-webkit-text-stroke:0.3px #fff;letter-spacing:0.306px;">Helena Abbott</span>
<div class="b" style="left:224.20px;top:190.50px;width:27.50px;height:11.50px;background:#fff;border-radius:6px;"></div>
<span class="t" style="left:227.80px;top:191px;font-size:8.19px;line-height:13px;color:#475867;-webkit-text-stroke:0.15px #475867;">00:23</span>
<div class="b" style="left:258.10px;top:189.90px;width:13.40px;height:13.40px;background:#fdeeed;border-radius:7px;"></div>
<div class="b" style="left:263.10px;top:194.10px;width:1.00px;height:5.00px;background:#ee7a74;"></div>
<div class="b" style="left:265.50px;top:194.10px;width:1.00px;height:5.00px;background:#ee7a74;"></div>
<div class="b" style="left:59.50px;top:225.90px;width:103.50px;height:17.60px;background:#264e6c;border-radius:2.5px;"></div>
<span class="t" style="left:67.20px;top:229px;font-size:7.60px;line-height:13px;color:#fff;font-weight:700;">Recent Activities</span>
<svg class="b" style="left:146.70px;top:233.10px;" width="6" height="4" viewBox="0 0 6 4"><path d="M1 0.900l2 2 2-2" fill="none" stroke="#fff" stroke-width="1.200" stroke-linecap="round" stroke-linejoin="round"/></svg>
<div class="b" style="left:253.20px;top:226.30px;width:17.20px;height:17.20px;background:#214968;border-radius:9px;"></div>
<svg class="b" style="left:258.80px;top:231.90px;" width="6" height="6" viewBox="0 0 6 6"><path d="M3 0.800v4.400M0.800 3h4.400" stroke="#fff" stroke-width="1.200" stroke-linecap="round"/></svg>
<span class="t" style="left:83.00px;top:255px;font-size:6.53px;line-height:11px;color:#8593a0;">PHONE CALLS</span>
<span class="t" style="left:83.00px;top:266px;font-size:9.41px;line-height:15px;color:#232d38;-webkit-text-stroke:0.15px #232d38;">Outgoing Call</span>
<span class="t" style="left:230.60px;top:255px;font-size:7.04px;line-height:11px;color:#7f8a95;">a minute ago</span>
<div class="b" style="left:52.00px;top:287.60px;width:226.90px;height:0.70px;background:#f0f2f5;"></div>
<svg class="b" style="left:61.30px;top:261.20px;" width="11.5" height="14.8" viewBox="0 0 9 12"><rect x="0.900" y="1.900" width="7.200" height="9.200" rx="1.300" fill="#fef7ec" stroke="#e9a95f" stroke-width="0.900"/><rect x="2.900" y="0.600" width="3.200" height="2.300" rx="0.700" fill="#fff" stroke="#e9a95f" stroke-width="0.800"/><path d="M2.800 5.300h3.400M2.800 7h3.400M2.800 8.700h2.200" stroke="#e9a95f" stroke-width="0.700"/></svg>
<span class="t" style="left:83.00px;top:295px;font-size:6.53px;line-height:11px;color:#8593a0;">PHONE CALLS</span>
<span class="t" style="left:83.00px;top:306px;font-size:9.41px;line-height:15px;color:#232d38;-webkit-text-stroke:0.15px #232d38;">Outgoing Call</span>
<span class="t" style="left:226.80px;top:295px;font-size:7.08px;line-height:12px;color:#7f8a95;">2 minutes ago</span>
<div class="b" style="left:52.00px;top:327.90px;width:226.90px;height:0.70px;background:#f0f2f5;"></div>
<svg class="b" style="left:61.30px;top:301.50px;" width="11.5" height="14.8" viewBox="0 0 9 12"><rect x="0.900" y="1.900" width="7.200" height="9.200" rx="1.300" fill="#fef7ec" stroke="#e9a95f" stroke-width="0.900"/><rect x="2.900" y="0.600" width="3.200" height="2.300" rx="0.700" fill="#fff" stroke="#e9a95f" stroke-width="0.800"/><path d="M2.800 5.300h3.400M2.800 7h3.400M2.800 8.700h2.200" stroke="#e9a95f" stroke-width="0.700"/></svg>
<span class="t" style="left:83.00px;top:336px;font-size:6.53px;line-height:11px;color:#8593a0;">PHONE CALLS</span>
<span class="t" style="left:83.00px;top:347px;font-size:9.41px;line-height:15px;color:#232d38;-webkit-text-stroke:0.15px #232d38;">Outgoing Call</span>
<span class="t" style="left:233.20px;top:336px;font-size:6.99px;line-height:11px;color:#7f8a95;">22 days ago</span>
<div class="b" style="left:52.00px;top:368.20px;width:226.90px;height:0.70px;background:#f0f2f5;"></div>
<svg class="b" style="left:61.30px;top:341.80px;" width="11.5" height="14.8" viewBox="0 0 9 12"><rect x="0.900" y="1.900" width="7.200" height="9.200" rx="1.300" fill="#fef7ec" stroke="#e9a95f" stroke-width="0.900"/><rect x="2.900" y="0.600" width="3.200" height="2.300" rx="0.700" fill="#fff" stroke="#e9a95f" stroke-width="0.800"/><path d="M2.800 5.300h3.400M2.800 7h3.400M2.800 8.700h2.200" stroke="#e9a95f" stroke-width="0.700"/></svg>
<span class="t" style="left:83.00px;top:376px;font-size:6.53px;line-height:11px;color:#8593a0;">PHONE CALLS</span>
<span class="t" style="left:83.00px;top:387px;font-size:9.41px;line-height:15px;color:#232d38;-webkit-text-stroke:0.15px #232d38;">Outgoing Call</span>
<span class="t" style="left:233.20px;top:376px;font-size:6.99px;line-height:11px;color:#7f8a95;">22 days ago</span>
<div class="b" style="left:52.00px;top:408.50px;width:226.90px;height:0.70px;background:#f0f2f5;"></div>
<svg class="b" style="left:61.30px;top:382.10px;" width="11.5" height="14.8" viewBox="0 0 9 12"><rect x="0.900" y="1.900" width="7.200" height="9.200" rx="1.300" fill="#fef7ec" stroke="#e9a95f" stroke-width="0.900"/><rect x="2.900" y="0.600" width="3.200" height="2.300" rx="0.700" fill="#fff" stroke="#e9a95f" stroke-width="0.800"/><path d="M2.800 5.300h3.400M2.800 7h3.400M2.800 8.700h2.200" stroke="#e9a95f" stroke-width="0.700"/></svg>
<span class="t" style="left:83.00px;top:416px;font-size:6.53px;line-height:11px;color:#8593a0;">PHONE CALLS</span>
<span class="t" style="left:83.00px;top:427px;font-size:9.41px;line-height:15px;color:#232d38;-webkit-text-stroke:0.15px #232d38;">Outgoing Call</span>
<span class="t" style="left:233.20px;top:416px;font-size:6.99px;line-height:11px;color:#7f8a95;">22 days ago</span>
<div class="b" style="left:52.00px;top:448.80px;width:226.90px;height:0.70px;background:#f0f2f5;"></div>
<svg class="b" style="left:61.30px;top:422.40px;" width="11.5" height="14.8" viewBox="0 0 9 12"><rect x="0.900" y="1.900" width="7.200" height="9.200" rx="1.300" fill="#fef7ec" stroke="#e9a95f" stroke-width="0.900"/><rect x="2.900" y="0.600" width="3.200" height="2.300" rx="0.700" fill="#fff" stroke="#e9a95f" stroke-width="0.800"/><path d="M2.800 5.300h3.400M2.800 7h3.400M2.800 8.700h2.200" stroke="#e9a95f" stroke-width="0.700"/></svg>
<div class="b" style="left:52.00px;top:473.00px;width:226.90px;height:0.80px;background:#e6eaef;"></div>
<svg class="b" style="left:72.30px;top:485.50px;" width="9.5" height="10.5" viewBox="0 0 9.5 10.5"><path d="M2.600 1.100h3l2.700 2.700v4.900a1.100 1.100 0 0 1-1.100 1.100H2.600a1.100 1.100 0 0 1-1.100-1.100V2.200a1.100 1.100 0 0 1 1.100-1.100z" fill="none" stroke="#4b5763" stroke-width="1.250" stroke-linejoin="round"/></svg>
<svg class="b" style="left:107.80px;top:486.00px;" width="10" height="9.5" viewBox="0 0 10 9.5"><path d="M1.700 1.200l1.300-.35 1 2-.9.800c.45 1.050 1.300 1.900 2.350 2.350l.8-.9 2 1-.35 1.300c-.1.450-.55.750-1.050.7C3.900 7.800 1.300 5.200 1 2.250c-.05-.5.250-.95.700-1.050z" fill="none" stroke="#4b5763" stroke-width="1.250" stroke-linejoin="round"/><circle cx="7.300" cy="1.700" r="0.750" fill="#4b5763"/><circle cx="7.300" cy="4" r="0.750" fill="#4b5763"/></svg>
<div class="b" style="left:145.50px;top:486.20px;width:1.40px;height:8.60px;background:#4b5763;border-radius:0.6px;"></div>
<div class="b" style="left:148.90px;top:486.20px;width:1.40px;height:8.60px;background:#4b5763;border-radius:0.6px;"></div>
<svg class="b" style="left:179.00px;top:485.30px;" width="9" height="11" viewBox="0 0 9 11"><rect x="3" y="0.700" width="3" height="5.600" rx="1.500" fill="#aab3bb" stroke="#4b5763" stroke-width="0.900"/><path d="M1.400 4.800c0 1.800 1.400 3 3.100 3s3.100-1.200 3.100-3M4.500 7.800v2M3 10h3" fill="none" stroke="#4b5763" stroke-width="0.950" stroke-linecap="round"/></svg>
<svg class="b" style="left:215.30px;top:485.00px;" width="8" height="11.5" viewBox="0 0 8 11.5"><rect x="0.2" y="0.2" width="1.800" height="1.800" rx="0.400" fill="#65717d"/><rect x="3.0" y="0.2" width="1.800" height="1.800" rx="0.400" fill="#65717d"/><rect x="5.8" y="0.2" width="1.800" height="1.800" rx="0.400" fill="#65717d"/><rect x="0.2" y="3.0" width="1.800" height="1.800" rx="0.400" fill="#65717d"/><rect x="3.0" y="3.0" width="1.800" height="1.800" rx="0.400" fill="#65717d"/><rect x="5.8" y="3.0" width="1.800" height="1.800" rx="0.400" fill="#65717d"/><rect x="0.2" y="5.8" width="1.800" height="1.800" rx="0.400" fill="#65717d"/><rect x="3.0" y="5.8" width="1.800" height="1.800" rx="0.400" fill="#65717d"/><rect x="5.8" y="5.8" width="1.800" height="1.800" rx="0.400" fill="#65717d"/><rect x="3.0" y="8.599999999999998" width="1.800" height="1.800" rx="0.400" fill="#65717d"/></svg>
<div class="b" style="left:243.20px;top:481.20px;width:19.20px;height:19.20px;background:#d72d30;border-radius:10px;"></div>
<svg class="b" style="left:247.30px;top:487.80px;" width="11" height="6" viewBox="0 0 11 6"><path d="M0.600 3.900c0-1 .5-1.700 1.300-2.100C3 1.200 4.200 .9 5.500 .9s2.500.3 3.600.9c.8.400 1.300 1.100 1.300 2.100v.6c0 .3-.3.500-.6.400L8 4.400c-.3-.1-.4-.3-.4-.6v-.9C6.900 2.700 6.200 2.600 5.500 2.600s-1.400.1-2.100.3v.9c0 .3-.1.500-.4.600l-1.800.5c-.3.100-.6-.1-.6-.4z" fill="#fff"/></svg>
</body></html>
